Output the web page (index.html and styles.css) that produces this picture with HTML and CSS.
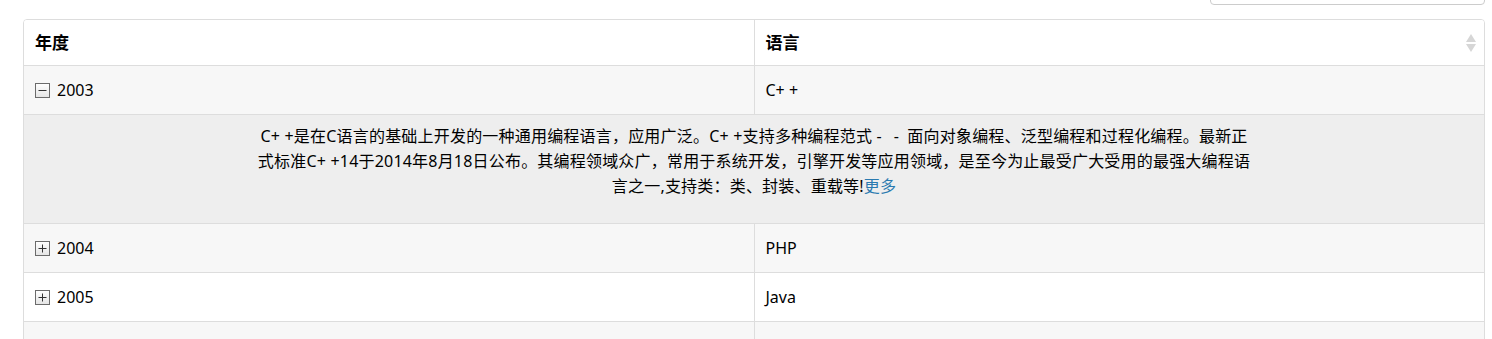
FILE: index.html
```html
<!DOCTYPE html>
<html lang="zh-CN">
<head>
<meta charset="utf-8">
<title>编程语言</title>
<link rel="stylesheet" href="styles.css">
</head>
<body>
<div class="toolbar">
  <input class="search" type="text" aria-label="搜索">
</div>
<div class="table-wrap">
  <table class="grid">
    <thead>
      <tr>
        <th><div class="th-inner">年度</div></th>
        <th class="col2">
          <div class="th-inner sortable">
            <span>语言</span>
            <svg class="sort" width="12" height="18" viewBox="0 0 12 18"><path d="M6 0 L11 8 L1 8 Z" fill="#d6d6d6"/><path d="M6 18 L11 10 L1 10 Z" fill="#d6d6d6"/></svg>
          </div>
        </th>
      </tr>
    </thead>
    <tbody>
      <tr class="odd">
        <td><div class="year"><svg class="toggle" width="15" height="15" viewBox="0 0 15 15"><defs><linearGradient id="g1" x1="0" y1="0" x2="0" y2="1"><stop offset="0" stop-color="#fff"/><stop offset="1" stop-color="#e4e4e4"/></linearGradient></defs><rect x="0.5" y="0.5" width="14" height="14" fill="url(#g1)" stroke="#6b6b6b"/><path d="M3.5 7.5 H11.5" stroke="#333" stroke-width="1"/></svg><span>2003</span></div></td>
        <td class="col2">C+ +</td>
      </tr>
      <tr class="detail">
        <td colspan="2">
          <p class="desc">C+ +是在C语言的基础上开发的一种通用编程语言，应用广泛。C+ +支持多种编程范式 <span class="dash">- -</span> 面向对象编程、泛型编程和过程化编程。最新正<br>式标准C+ +14于2014年8月18日公布。其编程领域众广，常用于系统开发，引擎开发等应用领域，是至今为止最受广大受用的最强大编程语<br>言之一,支持类：类、封装、重载等!<a href="#" class="more">更多</a></p>
        </td>
      </tr>
      <tr class="odd">
        <td><div class="year"><svg class="toggle" width="15" height="15" viewBox="0 0 15 15"><defs><linearGradient id="g2" x1="0" y1="0" x2="0" y2="1"><stop offset="0" stop-color="#fff"/><stop offset="1" stop-color="#e4e4e4"/></linearGradient></defs><rect x="0.5" y="0.5" width="14" height="14" fill="url(#g2)" stroke="#6b6b6b"/><path d="M3.5 7.5 H11.5 M7.5 3.5 V11.5" stroke="#333" stroke-width="1"/></svg><span>2004</span></div></td>
        <td class="col2">PHP</td>
      </tr>
      <tr class="even">
        <td><div class="year"><svg class="toggle" width="15" height="15" viewBox="0 0 15 15"><defs><linearGradient id="g3" x1="0" y1="0" x2="0" y2="1"><stop offset="0" stop-color="#fff"/><stop offset="1" stop-color="#e4e4e4"/></linearGradient></defs><rect x="0.5" y="0.5" width="14" height="14" fill="url(#g3)" stroke="#6b6b6b"/><path d="M3.5 7.5 H11.5 M7.5 3.5 V11.5" stroke="#333" stroke-width="1"/></svg><span>2005</span></div></td>
        <td class="col2">Java</td>
      </tr>
      <tr class="odd">
        <td><div class="year"><svg class="toggle" width="15" height="15" viewBox="0 0 15 15"><defs><linearGradient id="g4" x1="0" y1="0" x2="0" y2="1"><stop offset="0" stop-color="#fff"/><stop offset="1" stop-color="#e4e4e4"/></linearGradient></defs><rect x="0.5" y="0.5" width="14" height="14" fill="url(#g4)" stroke="#6b6b6b"/><path d="M3.5 7.5 H11.5 M7.5 3.5 V11.5" stroke="#333" stroke-width="1"/></svg><span>2006</span></div></td>
        <td class="col2">Python</td>
      </tr>
    </tbody>
  </table>
</div>
</body>
</html>
```

FILE: styles.css
```css
html, body {
  margin: 0;
  background: #fff;
}
body {
  padding: 0 7px 0 23px;
  font-family: "Noto Sans", "Noto Sans CJK SC", sans-serif;
  font-size: 16px;
  color: #000;
  overflow: hidden;
}
.toolbar {
  display: flex;
  justify-content: flex-end;
  margin-top: -29px;
  margin-bottom: 14px;
}
.search {
  width: 275px;
  height: 34px;
  box-sizing: border-box;
  border: 1px solid #cccccc;
  border-radius: 4px;
  background: #fff;
  margin: 0;
}
.table-wrap {
  border: 1px solid #dddddd;
  border-radius: 4px 4px 0 0;
  overflow: hidden;
}
.grid {
  width: 100%;
  border-collapse: collapse;
  table-layout: fixed;
}
.grid th,
.grid td {
  padding: 0 11px;
  text-align: left;
  vertical-align: middle;
  line-height: 20px;
}
.grid th {
  height: 45px;
  font-weight: bold;
  font-size: 17px;
  border-bottom: 1px solid #dddddd;
  background: #fff;
}
.grid td {
  height: 48px;
  border-bottom: 1px solid #dddddd;
}
.grid .col2 {
  border-left: 1px solid #dddddd;
}
.th-inner {
  display: flex;
  align-items: center;
  justify-content: space-between;
}
.sort {
  display: block;
  margin-right: -4px;
}
.odd td {
  background: #f7f7f7;
}
.even td {
  background: #ffffff;
}
.year {
  display: flex;
  align-items: center;
  gap: 7px;
}
.toggle {
  display: block;
  flex: none;
}
.detail td {
  background: #eeeeee;
  padding: 9px 0 24px;
  height: auto;
}
.desc {
  width: 1020px;
  margin: 0 auto;
  text-align: center;
  line-height: 25px;
  letter-spacing: 0.2px;
  white-space: nowrap;
}
.dash {
  letter-spacing: 4px;
}
.more {
  color: #2a7ab0;
  text-decoration: none;
}
```
